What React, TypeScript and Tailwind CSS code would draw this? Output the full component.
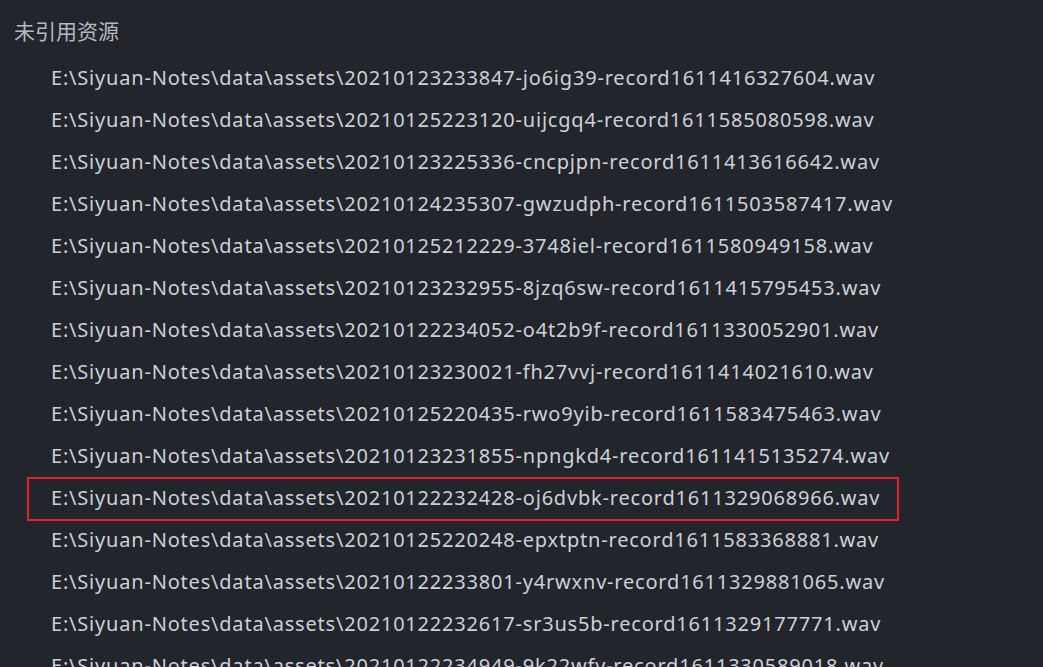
const assets = [
  '20210123233847-jo6ig39-record1611416327604.wav',
  '20210125223120-uijcgq4-record1611585080598.wav',
  '20210123225336-cncpjpn-record1611413616642.wav',
  '20210124235307-gwzudph-record1611503587417.wav',
  '20210125212229-3748iel-record1611580949158.wav',
  '20210123232955-8jzq6sw-record1611415795453.wav',
  '20210122234052-o4t2b9f-record1611330052901.wav',
  '20210123230021-fh27vvj-record1611414021610.wav',
  '20210125220435-rwo9yib-record1611583475463.wav',
  '20210123231855-npngkd4-record1611415135274.wav',
  '20210122232428-oj6dvbk-record1611329068966.wav',
  '20210125220248-epxtptn-record1611583368881.wav',
  '20210122233801-y4rwxnv-record1611329881065.wav',
  '20210122232617-sr3us5b-record1611329177771.wav',
  '20210122234949-9k22wfv-record1611330589018.wav',
]

// 第 11 行被红框标出
const HIGHLIGHT = 10

export default function App() {
  return (
    <div
      className="h-[667px] w-full overflow-hidden bg-[#22252b] text-[#ccd1d7]"
      style={{ fontFamily: '"Noto Sans", "Noto Sans CJK SC", sans-serif' }}
    >
      <div className="h-[57px] pl-[14px] pt-[16px] text-[21px] leading-[30px] text-[#b5b9be]">
        未引用资源
      </div>
      <ul>
        {assets.map((name, i) => (
          <li key={name} className="flex h-[42px] items-start pl-[51px] text-[20px] tracking-[0.8px]">
            <span className="relative block whitespace-nowrap leading-[42px]">
              E:\Siyuan-Notes\data\assets\{name}
              {i === HIGHLIGHT && (
                <span className="pointer-events-none absolute -left-[24px] -right-[19px] top-0 -bottom-[2px] border-2 border-[#e5222b]" />
              )}
            </span>
          </li>
        ))}
      </ul>
    </div>
  )
}
